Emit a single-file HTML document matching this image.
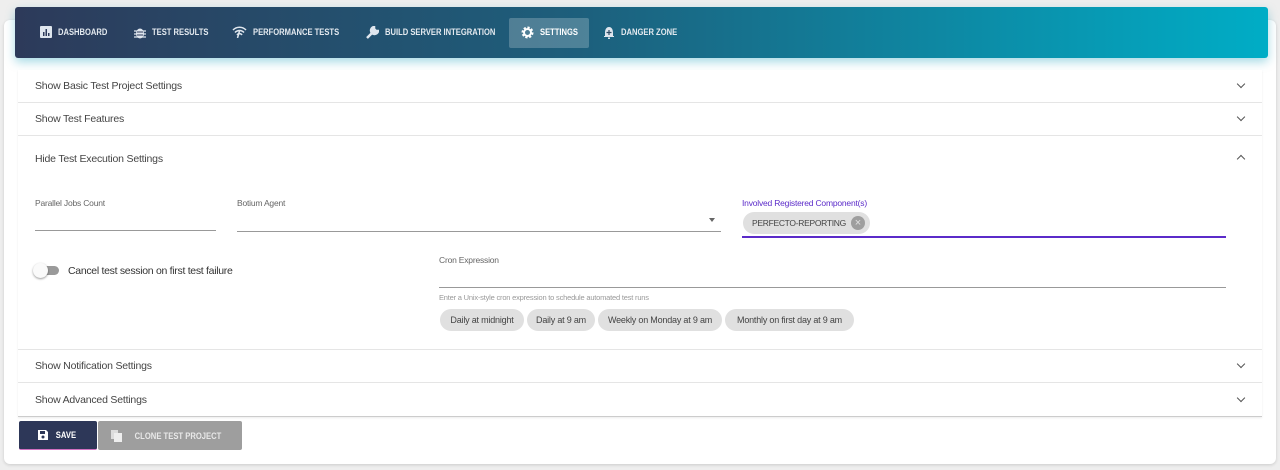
<!DOCTYPE html>
<html><head><style>
*{box-sizing:border-box;margin:0;padding:0}
body{width:1280px;height:470px;background:#eeeeee;font-family:"Liberation Sans",sans-serif;position:relative;overflow:hidden;color:#333}
.card{position:absolute;left:4px;top:20px;width:1272px;height:444px;background:#fff;border-radius:6px;box-shadow:0 1px 3px rgba(0,0,0,.15)}
.hdr{position:absolute;left:15px;top:7px;width:1253px;height:51px;border-radius:3px;background:linear-gradient(90deg,#2d3a5a 0%,#1d5f7c 45%,#00adc6 100%);box-shadow:0 4px 10px rgba(0,150,180,.35)}
.ic{position:absolute;top:19px}
.t{position:absolute;top:20px;color:#e3e9ef;font-size:9.5px;font-weight:bold;white-space:nowrap;transform:scaleX(.8);transform-origin:left}
.act{position:absolute;left:494px;top:11px;width:80px;height:30px;background:rgba(255,255,255,.22);border-radius:2px}
.panel{position:absolute;left:18px;width:1244px;background:#fff;border-bottom:1px solid #e6e6e6;box-shadow:0 1px 2px rgba(0,0,0,.08)}
.row{position:absolute;left:17px;font-size:10.5px;color:#444;letter-spacing:-.2px}
.chev{position:absolute;right:18px;width:6px;height:6px;border-right:1.5px solid #555;border-bottom:1.5px solid #555;transform:rotate(45deg)}
.up{transform:rotate(-135deg)}
.lbl{position:absolute;font-size:8.5px;color:#666;letter-spacing:-.2px}
.line{position:absolute;height:1px;background:#999}
.chip{position:absolute;top:309px;height:22px;border-radius:11px;background:#e0e0e0;font-size:9px;color:#444;line-height:22px;text-align:center;letter-spacing:-.2px}
</style></head><body>
<div class="card"></div>
<div class="hdr">
 <div class="act"></div>
 <svg class="ic" style="left:25px" width="12" height="12"><rect width="12" height="12" rx="1" fill="#dfe6ee"/><rect x="3" y="6" width="1.5" height="4" fill="#2d3a5a"/><rect x="5.5" y="3" width="1.5" height="7" fill="#2d3a5a"/><rect x="8" y="7" width="1.5" height="3" fill="#2d3a5a"/></svg><span class="t" style="left:43px">DASHBOARD</span>
 <svg class="ic" style="left:119px" width="12" height="13"><ellipse cx="6" cy="7.5" rx="4" ry="5" fill="#dfe6ee"/><path d="M0 5h12M0 8h12M0 11h12" stroke="#dfe6ee" stroke-width="1.3"/><path d="M3 6h6M3 9h6" stroke="#2d3a5a" stroke-width="1"/></svg><span class="t" style="left:137px">TEST RESULTS</span>
 <svg class="ic" style="left:217px" width="15" height="12"><path d="M1 4a9 9 0 0 1 13 0M3 6.5a6 6 0 0 1 9 0M5 9a3 3 0 0 1 5 0" stroke="#dfe6ee" stroke-width="1.5" fill="none"/><path d="M7.5 5l-2 7" stroke="#dfe6ee" stroke-width="1.5"/></svg><span class="t" style="left:238px">PERFORMANCE TESTS</span>
 <svg class="ic" style="left:350px" width="14" height="14"><path d="M2 12l6-6M9 1a3.5 3.5 0 1 0 4 4l-2 0-2-2z" stroke="#dfe6ee" stroke-width="2.5" fill="#dfe6ee"/></svg><span class="t" style="left:370px">BUILD SERVER INTEGRATION</span>
 <svg class="ic" style="left:506px" width="13" height="13" viewBox="0 0 13 13"><circle cx="6.5" cy="6.5" r="4.5" fill="none" stroke="#fff" stroke-width="3" stroke-dasharray="2 1.5"/><circle cx="6.5" cy="6.5" r="3.5" fill="none" stroke="#fff" stroke-width="2"/></svg><span class="t" style="left:525px;color:#fff">SETTINGS</span>
 <svg class="ic" style="left:588px" width="12" height="13"><path d="M6 1c3 0 4 3 4 6v3h1v1H1v-1h1V7c0-3 1-6 4-6z" fill="#dfe6ee"/><rect x="5" y="11.5" width="2" height="1.5" fill="#dfe6ee"/><path d="M6 4v5M3.5 6.5h5" stroke="#2d4a64" stroke-width="1.2"/></svg><span class="t" style="left:606px">DANGER ZONE</span>
</div>

<div class="panel" style="top:70px;height:33px"><div class="row" style="top:10px">Show Basic Test Project Settings</div><div class="chev" style="top:11px"></div></div>
<div class="panel" style="top:103px;height:33px"><div class="row" style="top:10px">Show Test Features</div><div class="chev" style="top:11px"></div></div>
<div class="panel" style="top:136px;height:214px">
 <div class="row" style="top:17px">Hide Test Execution Settings</div><div class="chev up" style="top:20px"></div>
</div>
<div class="lbl" style="left:35px;top:198px">Parallel Jobs Count</div>
<div class="line" style="left:35px;top:230px;width:181px"></div>
<div class="lbl" style="left:237px;top:198px">Botium Agent</div>
<div class="line" style="left:237px;top:231px;width:484px"></div>
<div style="position:absolute;left:709px;top:218px;border-left:3.5px solid transparent;border-right:3.5px solid transparent;border-top:4px solid #666"></div>
<div class="lbl" style="left:742px;top:198px;color:#5b2bc9">Involved Registered Component(s)</div>
<div style="position:absolute;left:743px;top:212px;width:127px;height:22px;border-radius:11px;background:#e0e0e0;font-size:8.5px;line-height:22px;padding-left:9px;color:#444;letter-spacing:-.3px">PERFECTO-REPORTING<span style="position:absolute;right:5px;top:4px;width:14px;height:14px;border-radius:7px;background:#9e9e9e;color:#e0e0e0;font-size:11px;line-height:14px;text-align:center;letter-spacing:0">×</span></div>
<div style="position:absolute;left:742px;top:236px;width:484px;height:2px;background:#5b2bc9"></div>
<div style="position:absolute;left:35px;top:266px;width:24px;height:9px;border-radius:5px;background:#9a9a9a"></div>
<div style="position:absolute;left:33px;top:263px;width:15px;height:15px;border-radius:8px;background:#fafafa;box-shadow:0 1px 2px rgba(0,0,0,.4)"></div>
<div style="position:absolute;left:68px;top:265px;font-size:10.5px;color:#333;letter-spacing:-.3px">Cancel test session on first test failure</div>
<div class="lbl" style="left:439px;top:255px">Cron Expression</div>
<div class="line" style="left:439px;top:287px;width:787px"></div>
<div class="lbl" style="left:439px;top:293px;font-size:7.5px;color:#999">Enter a Unix-style cron expression to schedule automated test runs</div>
<div class="chip" style="left:440px;width:84px">Daily at midnight</div>
<div class="chip" style="left:527px;width:68px">Daily at 9 am</div>
<div class="chip" style="left:598px;width:124px">Weekly on Monday at 9 am</div>
<div class="chip" style="left:725px;width:129px">Monthly on first day at 9 am</div>

<div class="panel" style="top:350px;height:33px"><div class="row" style="top:10px">Show Notification Settings</div><div class="chev" style="top:11px"></div></div>
<div class="panel" style="top:383px;height:34px;border-bottom:1px solid #ccc"><div class="row" style="top:11px">Show Advanced Settings</div><div class="chev" style="top:12px"></div></div>

<div style="position:absolute;left:19px;top:421px;width:78px;height:29px;background:#2d3758;border-radius:2px;border-bottom:1px solid #d070c0;color:#fff;font-size:9px;font-weight:bold;display:flex;align-items:center;justify-content:center"><svg width="10" height="10" style="margin-right:6px"><path d="M0 0h8l2 2v8H0z" fill="#fff"/><rect x="2" y="1" width="5" height="3" fill="#2d3758"/><circle cx="5" cy="7" r="1.5" fill="#2d3758"/></svg><span style="transform:scaleX(.85);display:inline-block">SAVE</span></div>
<div style="position:absolute;left:98px;top:421px;width:144px;height:29px;background:#9e9e9e;border-radius:2px;color:#e8e8e8;font-size:9px;font-weight:bold;display:flex;align-items:center;justify-content:center"><svg width="11" height="12" style="margin-right:5px"><rect x="0" y="0" width="7" height="9" fill="#ddd"/><rect x="3" y="3" width="8" height="9" fill="#eee"/></svg><span style="transform:scaleX(.85);display:inline-block">CLONE TEST PROJECT</span></div>
</body></html>
